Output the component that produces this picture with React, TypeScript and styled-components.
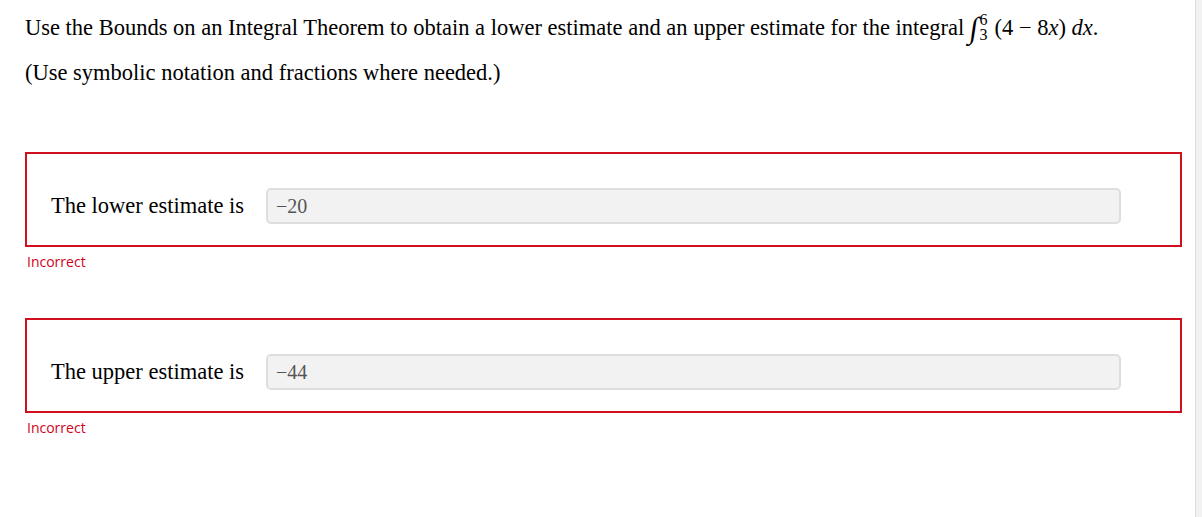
import React from "react";
import styled, { createGlobalStyle } from "styled-components";

const GlobalStyle = createGlobalStyle`
  html, body {
    margin: 0;
    padding: 0;
    background: #fff;
  }
`;

const Page = styled.div`
  display: flex;
  height: 517px;
  overflow: hidden;
`;

const Main = styled.main`
  flex: 1;
  padding: 0 13px 0 25px;
  font-family: "Liberation Serif", "Times New Roman", serif;
  color: #000;
`;

const Strip = styled.div`
  width: 6px;
  background: #f2f2f2;
  border-left: 1px solid #dcdcdc;
`;

const Prompt = styled.p<{ $top: number }>`
  margin: ${(p) => p.$top}px 0 0;
  font-size: 22.5px;
  line-height: 28px;
  white-space: nowrap;
`;

const Integral = styled.span`
  display: inline-flex;
  align-items: center;
  height: 28px;
  vertical-align: top;
  margin: 0 7px 0 6px;
`;

const Sign = styled.span`
  font-style: italic;
  font-size: 30px;
  line-height: 28px;
  transform: skewX(-8deg);
`;

const Limits = styled.span`
  display: inline-flex;
  flex-direction: column;
  gap: 3px;
  font-size: 16px;
  line-height: 12px;
  margin-left: 1px;
  transform: translateY(-1px);
`;

const Var = styled.i``;

const Answer = styled.section<{ $top: number }>`
  margin-top: ${(p) => p.$top}px;
`;

const Box = styled.div`
  display: flex;
  align-items: center;
  gap: 22px;
  border: 2px solid #d0101f;
  padding: 34px 59px 21px 24px;
`;

const Label = styled.span`
  font-size: 22.5px;
  line-height: 36px;
  white-space: nowrap;
`;

const Field = styled.div`
  flex: 1;
  height: 36px;
  box-sizing: border-box;
  border: 2px solid #dedede;
  border-radius: 5px;
  background: #f2f2f2;
  color: #555;
  font-size: 20px;
  display: flex;
  align-items: center;
  padding-left: 8px;
`;

const Feedback = styled.div`
  margin: 5px 0 0 2px;
  font-family: "Open Sans", "Noto Sans", sans-serif;
  font-size: 14px;
  line-height: 19px;
  color: #d0021b;
`;

const answers = [
  { label: "The lower estimate is", value: "\u221220", top: 65 },
  { label: "The upper estimate is", value: "\u221244", top: 47 },
];

export default function App() {
  return (
    <>
      <GlobalStyle />
      <Page>
        <Main>
          <Prompt $top={14}>
            Use the Bounds on an Integral Theorem to obtain a lower estimate and an upper estimate for the integral
            <Integral>
              <Sign>∫</Sign>
              <Limits>
                <span>6</span>
                <span>3</span>
              </Limits>
            </Integral>
            (4 − 8<Var>x</Var>) <Var>dx</Var>.
          </Prompt>
          <Prompt $top={17}>(Use symbolic notation and fractions where needed.)</Prompt>
          {answers.map((a) => (
            <Answer key={a.label} $top={a.top}>
              <Box>
                <Label>{a.label}</Label>
                <Field>{a.value}</Field>
              </Box>
              <Feedback>Incorrect</Feedback>
            </Answer>
          ))}
        </Main>
        <Strip />
      </Page>
    </>
  );
}
